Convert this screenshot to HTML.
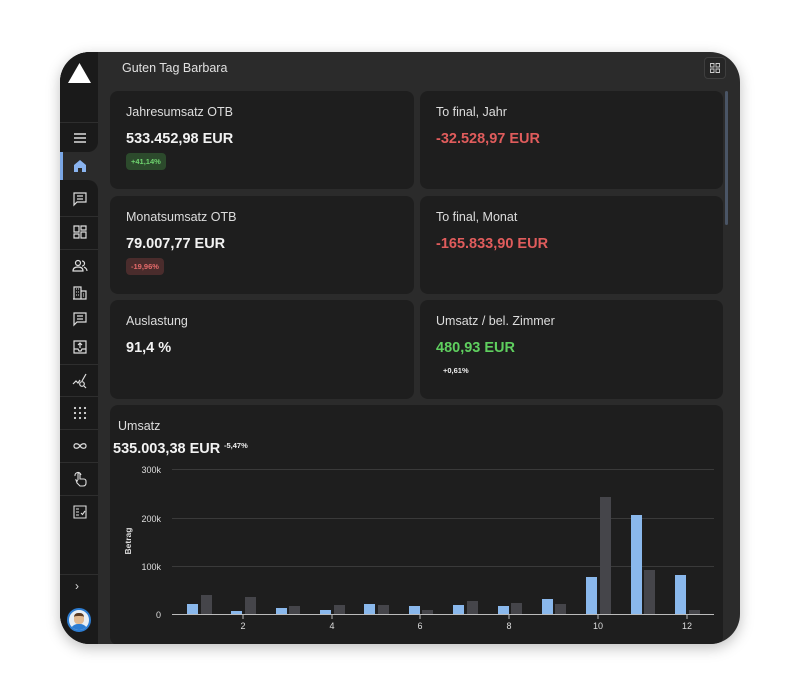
<!DOCTYPE html>
<html><head><meta charset="utf-8"><style>
*{margin:0;padding:0;box-sizing:border-box}
body{width:800px;height:696px;background:#fff;position:relative;overflow:hidden;font-family:"Liberation Sans",sans-serif}
.frame{position:absolute;left:60px;top:52px;width:680px;height:592px;border-radius:30px;background:#2b2b2b;overflow:hidden;box-shadow:0 4px 14px rgba(0,0,0,.25)}
.side{position:absolute;left:0;top:0;width:38px;height:100%;background:#2b2b2b}
.blk{position:absolute;left:0;width:38px;background:#1a1a1a}
.card{position:absolute;background:#1e1e1e;border-radius:8px}
.t{position:absolute;left:16px;top:14px;font-size:12.5px;color:#ddd}
.v{position:absolute;left:16px;top:40px;font-size:14.5px;font-weight:bold;color:#f2f2f2}
.badge{position:absolute;left:16px;top:62px;font-size:7.5px;font-weight:bold;padding:4px 5px;border-radius:4px}
.ic{position:absolute;left:12px;width:16px;height:16px}
.sep{position:absolute;left:0;width:38px;height:1px;background:#2e2e2e}
</style></head><body>
<div class="frame">
 <div class="side">
  <div class="blk" style="top:0;height:100px;border-bottom-right-radius:10px"></div>
  <div class="blk" style="top:128px;height:464px;border-top-right-radius:10px"></div>
  <svg style="position:absolute;left:7px;top:10px" width="25" height="22"><polygon points="12.5,1 24,21 1,21" fill="#fff"/></svg>
  <div class="sep" style="top:70px"></div>
  <svg class="ic" style="top:78px" viewBox="0 0 16 16"><path d="M2 4h12M2 8h12M2 12h12" stroke="#ddd" stroke-width="1.4"/></svg>
  <div style="position:absolute;left:0;top:100px;width:3px;height:28px;background:#7aa7e6"></div>
  <svg class="ic" style="top:106px" viewBox="0 0 16 16"><path d="M2 7L8 2l6 5v7h-4v-4H6v4H2z" fill="#8ab4f0"/></svg>
  <svg class="ic" style="top:139px" viewBox="0 0 16 16"><path d="M2 2h12v9H5l-3 3z M5 5h6M5 8h6" fill="none" stroke="#ddd" stroke-width="1.2"/></svg>
  <div class="sep" style="top:164px"></div>
  <svg class="ic" style="top:172px" viewBox="0 0 16 16"><path d="M2 2h5v6H2zM9 2h5v4H9zM9 8h5v6H9zM2 10h5v4H2z" fill="none" stroke="#ddd" stroke-width="1.2"/></svg>
  <div class="sep" style="top:197px"></div>
  <svg class="ic" style="top:206px" viewBox="0 0 16 16"><circle cx="6" cy="5" r="2.5" fill="none" stroke="#ddd" stroke-width="1.2"/><path d="M1 13c0-3 2-4 5-4s5 1 5 4zM10 3a2.5 2.5 0 010 5M12 9c2 1 3 2 3 4" fill="none" stroke="#ddd" stroke-width="1.2"/></svg>
  <svg class="ic" style="top:233px" viewBox="0 0 16 16"><path d="M2 14V2h7v12M9 6h5v8H1" fill="none" stroke="#ddd" stroke-width="1.2"/><path d="M4 4h1M6 4h1M4 7h1M6 7h1M4 10h1M6 10h1M11 9h1M11 11h1" stroke="#ddd"/></svg>
  <svg class="ic" style="top:259px" viewBox="0 0 16 16"><path d="M2 2h12v9H5l-3 3z M5 5h6M5 8h6" fill="none" stroke="#ddd" stroke-width="1.2"/></svg>
  <svg class="ic" style="top:287px" viewBox="0 0 16 16"><path d="M2 2h12v12H2zM2 10h4l1 2h2l1-2h4M8 9V4M6 6l2-2 2 2" fill="none" stroke="#ddd" stroke-width="1.2"/></svg>
  <div class="sep" style="top:312px"></div>
  <svg class="ic" style="top:321px" viewBox="0 0 16 16"><path d="M1 11l3-3 2 2 2-3M14 1l-4 7" fill="none" stroke="#ddd" stroke-width="1.2"/><circle cx="10" cy="11" r="2.3" fill="none" stroke="#ddd" stroke-width="1.2"/><path d="M12 13l2 2" stroke="#ddd" stroke-width="1.2"/></svg>
  <div class="sep" style="top:344px"></div>
  <svg class="ic" style="top:353px" viewBox="0 0 16 16" fill="#ddd"><circle cx="3" cy="3" r="1.1"/><circle cx="8" cy="3" r="1.1"/><circle cx="13" cy="3" r="1.1"/><circle cx="3" cy="8" r="1.1"/><circle cx="8" cy="8" r="1.1"/><circle cx="13" cy="8" r="1.1"/><circle cx="3" cy="13" r="1.1"/><circle cx="8" cy="13" r="1.1"/><circle cx="13" cy="13" r="1.1"/></svg>
  <div class="sep" style="top:377px"></div>
  <svg class="ic" style="top:386px" viewBox="0 0 16 16"><path d="M8 8c-2-3-6-3-6 0s4 3 6 0 6-3 6 0-4 3-6 0z" fill="none" stroke="#ddd" stroke-width="1.2"/></svg>
  <div class="sep" style="top:410px"></div>
  <svg class="ic" style="top:419px" viewBox="0 0 16 16"><path d="M6 9V3a1 1 0 012 0v5h4c1 0 2 1 2 2v2c0 2-1 3-3 3H8l-3-3-1-3 2 1M3 5a3 3 0 016-1" fill="none" stroke="#ddd" stroke-width="1.1"/></svg>
  <div class="sep" style="top:443px"></div>
  <svg class="ic" style="top:452px" viewBox="0 0 16 16"><path d="M2 2h12v12H2zM4 5h3M4 8h3M4 11h3M9 9l1.5 1.5L13 7" fill="none" stroke="#ddd" stroke-width="1.1"/></svg>
  <div class="sep" style="top:522px"></div>
  <div style="position:absolute;left:15px;top:527px;color:#ddd;font-size:12px">›</div>
  <div style="position:absolute;left:7px;top:556px;width:24px;height:24px;border-radius:50%;background:#e8eef4;border:2px solid #2d7dd2;overflow:hidden">
   <div style="position:absolute;left:5px;top:3px;width:10px;height:11px;border-radius:4px;background:#e0b88f;border-top:3px solid #5a3a22"></div>
   <div style="position:absolute;left:1px;top:14px;width:18px;height:8px;border-radius:8px 8px 0 0;background:#2d7dd2"></div>
  </div>
 </div>
 <div style="position:absolute;left:62px;top:9px;font-size:12.5px;color:#e0e0e0">Guten Tag Barbara</div>
 <div style="position:absolute;left:644px;top:5px;width:22px;height:22px;border:1px solid #3e3e3e;border-radius:4px;background:#262626">
  <svg style="position:absolute;left:5px;top:5px" width="10" height="10" viewBox="0 0 10 10"><path d="M0.5 0.5h3.5v3.5H0.5zM6 0.5h3.5v3.5H6zM0.5 6h3.5v3.5H0.5zM6 6h3.5v3.5H6z" fill="none" stroke="#ccc" stroke-width="0.9"/></svg>
 </div>
 <div style="position:absolute;left:665px;top:39px;width:3px;height:134px;border-radius:2px;background:#4a5566"></div>

 <div class="card" style="left:50px;top:39px;width:304px;height:98px"><div class="t">Jahresumsatz OTB</div><div class="v">533.452,98 EUR</div><div class="badge" style="background:#2c4a2c;color:#6fd46f">+41,14%</div></div>
 <div class="card" style="left:360px;top:39px;width:303px;height:98px"><div class="t">To final, Jahr</div><div class="v" style="color:#e05c5c">-32.528,97 EUR</div></div>
 <div class="card" style="left:50px;top:144px;width:304px;height:98px"><div class="t">Monatsumsatz OTB</div><div class="v">79.007,77 EUR</div><div class="badge" style="background:#4a2c2c;color:#e46a6a">-19,96%</div></div>
 <div class="card" style="left:360px;top:144px;width:303px;height:98px"><div class="t">To final, Monat</div><div class="v" style="color:#e05c5c">-165.833,90 EUR</div></div>
 <div class="card" style="left:50px;top:248px;width:304px;height:99px"><div class="t">Auslastung</div><div class="v">91,4 %</div></div>
 <div class="card" style="left:360px;top:248px;width:303px;height:99px"><div class="t">Umsatz / bel. Zimmer</div><div class="v" style="color:#5fcf5f">480,93 EUR</div><div class="badge" style="left:18px;color:#eee">+0,61%</div></div>
 <div class="card" style="left:50px;top:353px;width:613px;height:240px">
  <div style="position:absolute;left:8px;top:14px;font-size:12.5px;color:#ddd">Umsatz</div>
  <div style="position:absolute;left:3px;top:36px;font-size:14.5px;font-weight:bold;color:#f2f2f2">535.003,38 EUR</div>
  <div style="position:absolute;left:114px;top:36px;font-size:7.5px;font-weight:bold;color:#eee">-5,47%</div>
 </div>
 <svg style="position:absolute;left:-60px;top:-52px" width="800" height="696">
  <g stroke="#3a3a3a" stroke-width="1"><line x1="172" y1="469.5" x2="714" y2="469.5"/><line x1="172" y1="518.5" x2="714" y2="518.5"/><line x1="172" y1="566.5" x2="714" y2="566.5"/></g>
  <g font-family="Liberation Sans Narrow, Liberation Sans, sans-serif" font-size="9" fill="#ddd" text-anchor="end">
   <text x="161" y="473">300k</text><text x="161" y="522">200k</text><text x="161" y="570">100k</text><text x="161" y="618">0</text>
  </g>
  <text transform="translate(131,541) rotate(-90)" font-size="8.5" font-weight="bold" fill="#ddd" text-anchor="middle">Betrag</text>
  <line x1="172" y1="614.5" x2="714" y2="614.5" stroke="#bbb"/>
  <g font-size="9" fill="#ddd" text-anchor="middle">
   <text x="243" y="629">2</text><text x="332" y="629">4</text><text x="420" y="629">6</text><text x="509" y="629">8</text><text x="598" y="629">10</text><text x="687" y="629">12</text>
  </g>
  <g stroke="#bbb"><line x1="243" y1="614" x2="243" y2="619"/><line x1="332" y1="614" x2="332" y2="619"/><line x1="420" y1="614" x2="420" y2="619"/><line x1="509" y1="614" x2="509" y2="619"/><line x1="598" y1="614" x2="598" y2="619"/><line x1="687" y1="614" x2="687" y2="619"/></g>
  <g fill="#8ab8ec">
   <rect x="187" y="604" width="11" height="10"/><rect x="231" y="611" width="11" height="3"/><rect x="276" y="608" width="11" height="6"/><rect x="320" y="610" width="11" height="4"/><rect x="364" y="604" width="11" height="10"/><rect x="409" y="606" width="11" height="8"/><rect x="453" y="605" width="11" height="9"/><rect x="498" y="606" width="11" height="8"/><rect x="542" y="599" width="11" height="15"/><rect x="586" y="577" width="11" height="37"/><rect x="631" y="515" width="11" height="99"/><rect x="675" y="575" width="11" height="39"/>
  </g>
  <g fill="#45454a">
   <rect x="201" y="595" width="11" height="19"/><rect x="245" y="597" width="11" height="17"/><rect x="289" y="606" width="11" height="8"/><rect x="334" y="605" width="11" height="9"/><rect x="378" y="605" width="11" height="9"/><rect x="422" y="610" width="11" height="4"/><rect x="467" y="601" width="11" height="13"/><rect x="511" y="603" width="11" height="11"/><rect x="555" y="604" width="11" height="10"/><rect x="600" y="497" width="11" height="117"/><rect x="644" y="570" width="11" height="44"/><rect x="689" y="610" width="11" height="4"/>
  </g>
 </svg>
</div>
</body></html>
